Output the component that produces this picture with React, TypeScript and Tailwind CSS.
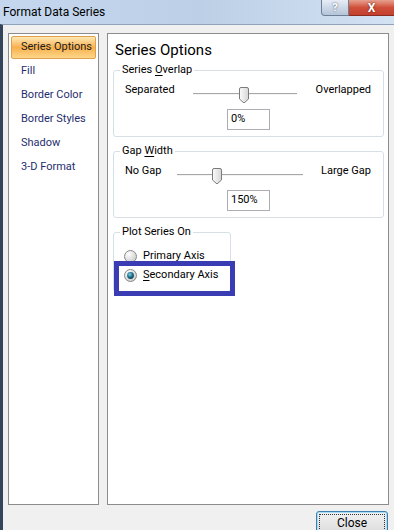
import React from "react";

const font = "font-['Roboto','Liberation_Sans',sans-serif]";

const SliderThumb: React.FC<{ x: number; width: number }> = ({ x, width }) => (
  <svg width={width} height={26} className="block">
    <defs>
      <linearGradient id={`thumb-${x}`} x1="0" y1="0" x2="1" y2="0">
        <stop offset="0" stopColor="#fbfbfb" />
        <stop offset="1" stopColor="#d6d6d6" />
      </linearGradient>
    </defs>
    <line x1={0} y1={16.5} x2={width} y2={16.5} stroke="#a7a7a7" strokeWidth={1} />
    <line x1={0} y1={17.5} x2={width} y2={17.5} stroke="#f4f4f4" strokeWidth={1} />
    <path
      d={`M${x + 0.5} 12 Q${x + 0.5} 10.5 ${x + 2} 10.5 H${x + 8} Q${x + 9.5} 10.5 ${x + 9.5} 12 V22 L${x + 5} 26 L${x + 0.5} 22 Z`}
      fill={`url(#thumb-${x})`}
      stroke="#7b7b7b"
      strokeWidth={1}
    />
  </svg>
);

const Radio: React.FC<{ checked?: boolean }> = ({ checked }) => (
  <svg width={13} height={13} className="block shrink-0">
    <defs>
      <radialGradient id="radio-off" cx="0.35" cy="0.3" r="0.8">
        <stop offset="0" stopColor="#ffffff" />
        <stop offset="1" stopColor="#c8c8c8" />
      </radialGradient>
      <radialGradient id="radio-on" cx="0.4" cy="0.35" r="0.7">
        <stop offset="0" stopColor="#7fd2ea" />
        <stop offset="0.6" stopColor="#1d6a86" />
        <stop offset="1" stopColor="#0e3a4e" />
      </radialGradient>
    </defs>
    <circle cx={6.5} cy={6.5} r={6} fill="url(#radio-off)" stroke="#8a8a8a" />
    {checked && <circle cx={6.5} cy={6.5} r={3.4} fill="url(#radio-on)" />}
  </svg>
);

const ValueBox: React.FC<{ value: string }> = ({ value }) => (
  <div className="mx-auto mt-[6px] flex h-[21px] w-[43px] items-center border border-[#abadb3] bg-white pl-[3px] text-black">
    {value}
  </div>
);

const NAV = ["Fill", "Border Color", "Border Styles", "Shadow", "3-D Format"];

export default function App() {
  return (
    <div className={`flex h-[530px] w-[394px] flex-col overflow-hidden whitespace-nowrap bg-[#f0f0f0] ${font} text-[11px] text-black`}>
      {/* title bar */}
      <div className="relative flex h-[24px] shrink-0 items-center bg-gradient-to-r from-[#c4d7ee] via-[#bccfe6] to-[#d3e2f3] pl-[3px]">
        <span className="text-[12px] leading-none">Format Data Series</span>
        <div className="absolute right-0 top-0 flex">
          <div className="flex h-[16px] w-[28px] items-center justify-center rounded-bl-[4px] border border-t-0 border-[#6d7f97] bg-gradient-to-b from-[#e6edf6] to-[#b5c4d8] text-[11px] font-bold leading-none text-white [text-shadow:0_0_2px_#3c4c64]">
            ?
          </div>
          <div className="flex h-[16px] w-[45px] items-center justify-center border-b border-[#8a2c20] bg-gradient-to-b from-[#e6a190] via-[#cf4f3b] to-[#c2402d] text-[12px] font-bold leading-none text-white [text-shadow:0_0_2px_#5a1208]">
            X
          </div>
        </div>
      </div>

      {/* body */}
      <div className="flex flex-1 flex-col border-l-[3px] border-t border-l-[#34445a] border-t-[#8fa3bd] pl-[5px] pr-[6px] pt-[8px]">
        <div className="flex h-[472px] shrink-0 gap-[8px]">
          {/* left nav */}
          <div className="flex w-[91px] shrink-0 flex-col border border-[#8c8c8c] bg-white p-[2px]">
            <div className="flex h-[23px] items-center rounded-[2px] border border-[#e2a04a] bg-gradient-to-b from-[#fde9b4] via-[#f8b04c] to-[#fcd78a] pl-[9px] text-[#1d1d1d]">
              Series Options
            </div>
            {NAV.map((n) => (
              <div key={n} className="flex h-[24px] items-center pl-[10px] text-[#1f2e6e]">
                {n}
              </div>
            ))}
          </div>

          {/* right content */}
          <div className="relative w-[282px] shrink-0 border border-[#8c8c8c] bg-white pl-[5px]">
            <h1 className="mt-[6px] pl-[2px] text-[15px] leading-[20px] text-black">Series Options</h1>

            <fieldset className="mt-[3px] w-[271px] rounded-[3px] border border-[#d5dfe5] px-[6px] pb-[6px]">
              <legend className="px-[2px] leading-[14px]">
                Series <span className="underline underline-offset-2">O</span>verlap
              </legend>
              <div className="grid h-[26px] grid-cols-[68px_104px_1fr] items-center pl-[5px] pr-[6px]">
                <span className="leading-[14px]">Separated</span>
                <SliderThumb x={46} width={104} />
                <span className="justify-self-end leading-[14px]">Overlapped</span>
              </div>
              <ValueBox value="0%" />
            </fieldset>

            <fieldset className="mt-[7px] w-[271px] rounded-[3px] border border-[#d5dfe5] px-[6px] pb-[6px]">
              <legend className="px-[2px] leading-[14px]">
                Gap <span className="underline underline-offset-2">W</span>idth
              </legend>
              <div className="grid h-[26px] grid-cols-[52px_126px_1fr] items-center pl-[5px] pr-[6px]">
                <span className="leading-[14px]">No Gap</span>
                <SliderThumb x={35} width={126} />
                <span className="justify-self-end leading-[14px]">Large Gap</span>
              </div>
              <ValueBox value="150%" />
            </fieldset>

            <fieldset className="mt-[7px] w-[118px] rounded-[3px] border border-[#d5dfe5] px-[6px] pb-[6px]">
              <legend className="px-[2px] leading-[14px]">Plot Series On</legend>
              <div className="mt-[8px] flex flex-col pl-[4px]">
                <div className="flex h-[19px] items-center gap-[6px]">
                  <Radio />
                  <span>
                    <span className="underline underline-offset-2">P</span>rimary Axis
                  </span>
                </div>
                <div className="flex h-[19px] items-center gap-[6px]">
                  <Radio checked />
                  <span>
                    <span className="underline underline-offset-2">S</span>econdary Axis
                  </span>
                </div>
              </div>
            </fieldset>

            {/* annotation highlight */}
            <div className="absolute left-[6px] top-[227px] h-[35px] w-[121px] border-[5px] border-[#3a3cb4]" />
          </div>
        </div>

        <div className="flex justify-end pt-[6px]">
          <div className="flex h-[23px] w-[72px] items-center justify-center rounded-[3px] border border-[#3c7fb1] bg-gradient-to-b from-[#f2f2f2] to-[#dcdcdc] p-[2px] text-[12px] shadow-[inset_0_0_0_1px_#a6dcf6]">
            <div className="flex h-full w-full items-center justify-center border border-dotted border-[#333]">
              Close
            </div>
          </div>
        </div>
      </div>
    </div>
  );
}
